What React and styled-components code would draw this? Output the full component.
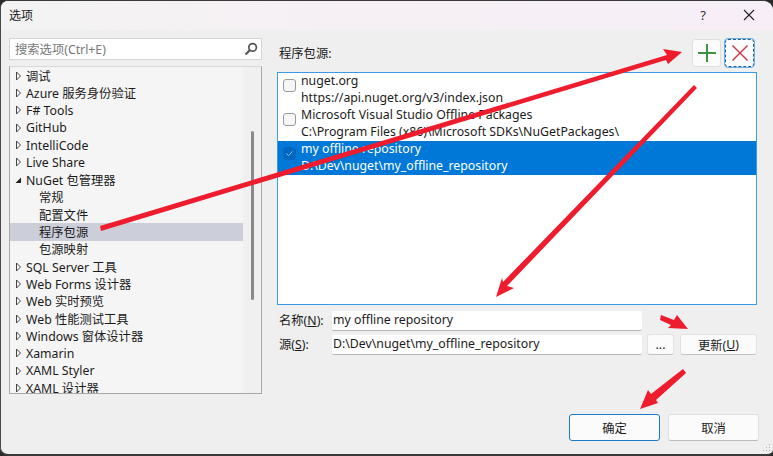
import React from 'react';
import styled, { createGlobalStyle } from 'styled-components';

const GlobalStyle = createGlobalStyle`
    html, body {
        margin: 0;
        padding: 0;
        background: #2a2a2a;
    }
    * {
        box-sizing: border-box;
    }
`;

const FONT = `"Noto Sans", "Noto Sans CJK SC", sans-serif`;

const Dialog = styled.div`
    position: relative;
    width: 773px;
    height: 456px;
    display: flex;
    flex-direction: column;
    overflow: hidden;
    background: #efefef;
    border-top: 1px solid #3a3a3a;
    border-left: 1px solid #4a4a4a;
    border-bottom: 2px solid #3a3a3a;
    border-radius: 8px 10px 6px 8px;
    font-family: ${FONT};
    font-size: 12.3px;
    color: #1b1b1b;
`;

const TitleBar = styled.div`
    flex: 0 0 29px;
    display: flex;
    align-items: center;
    padding: 0 18px 1px 8px;
    background: linear-gradient(90deg, #f3f3f3 0%, #f6f0f4 45%, #f7eef7 100%);
`;

const Title = styled.div`
    flex: 1;
    font-size: 12px;
`;

const HelpMark = styled.span`
    font-size: 13px;
    color: #333;
    margin-right: 37px;
`;

const Body = styled.div`
    flex: 1;
    display: flex;
    min-height: 0;
`;

const LeftPane = styled.div`
    flex: 0 0 276px;
    padding: 8px 0 0 8px;
    display: flex;
    flex-direction: column;
    gap: 6px;
`;

const SearchBox = styled.div`
    width: 253px;
    height: 22px;
    display: flex;
    align-items: center;
    justify-content: space-between;
    padding: 0 3px 1px 5px;
    background: #fff;
    border: 1px solid #d5d5d5;
    color: #777;
`;

const TreeBox = styled.div`
    width: 253px;
    height: 328px;
    display: flex;
    background: #f5f5f5;
    border: 1px solid #a8a8a8;
    border-top-color: #d8d8d8;
    overflow: hidden;
`;

const TreeList = styled.div`
    flex: 0 0 233px;
`;

const TreeRow = styled.div`
    height: 17.36px;
    display: flex;
    align-items: center;
    white-space: nowrap;
    padding-left: ${props => (props.child ? '29px' : '5px')};
    background: ${props => (props.selected ? '#ccced9' : 'transparent')};
`;

const Twisty = styled.svg`
    flex: 0 0 7px;
    width: 7px;
    height: 10px;
    margin-right: 4px;
`;

const ScrollTrack = styled.div`
    flex: 1;
    display: flex;
    justify-content: center;
    background: #f0f0f0;
    padding: 64px 0 0 1px;
`;

const ScrollThumb = styled.div`
    width: 3px;
    height: 169px;
    border-radius: 2px;
    background: #8a8a8a;
`;

const RightPane = styled.div`
    flex: 1;
    padding: 9px 15px 0 0;
    display: flex;
    flex-direction: column;
`;

const SourceHeader = styled.div`
    height: 32px;
    display: flex;
    align-items: flex-start;
    gap: 4px;
    padding-left: 2px;
    margin-right: 4px;
    margin-bottom: 1px;
`;

const HeaderLabel = styled.div`
    flex: 1;
    padding-top: 5px;
`;

const IconButton = styled.div`
    width: 29px;
    height: 28px;
    display: flex;
    align-items: center;
    justify-content: center;
    background: #fbfbfb;
    border-radius: 3px;
    border: ${props => (props.focused ? '1px dashed #1c5f9c' : '1px solid #e0e0e0')};
    outline: ${props => (props.focused ? '1px solid #6aaee6' : 'none')};
`;

const SourceList = styled.div`
    width: 480px;
    height: 233px;
    background: #fff;
    border: 1px solid #3c9ae4;
`;

const SourceItem = styled.div`
    height: 34px;
    display: flex;
    align-items: center;
    padding-left: 5px;
    background: ${props => (props.selected ? '#0078d7' : 'transparent')};
    color: ${props => (props.selected ? '#fff' : '#1b1b1b')};
`;

const CheckBox = styled.div`
    flex: 0 0 13px;
    width: 13px;
    height: 13px;
    margin-right: 5px;
    align-self: flex-start;
    margin-top: 6px;
    display: flex;
    align-items: center;
    justify-content: center;
    border-radius: 3px;
    background: ${props => (props.checked ? '#0067c0' : '#f6f6f6')};
    border: 1px solid ${props => (props.checked ? '#0067c0' : '#9a9a9a')};
`;

const SourceText = styled.div`
    line-height: 17px;
    white-space: nowrap;
    padding-bottom: 2px;
`;

const FieldRow = styled.div`
    display: flex;
    align-items: center;
    height: 21px;
    margin-top: ${props => props.gap}px;
`;

const FieldLabel = styled.div`
    flex: 0 0 55px;
    padding: 0 0 2px 2px;
    white-space: nowrap;
`;

const Underlined = styled.span`
    text-decoration: underline;
`;

const TextField = styled.div`
    width: 310px;
    height: 20px;
    display: flex;
    align-items: center;
    padding: 0 0 2px 1px;
    background: #fff;
    border-bottom: 1px solid #b5b5b5;
    border-radius: 2px;
    white-space: nowrap;
`;

const SmallButton = styled.div`
    width: ${props => props.w}px;
    height: 21px;
    margin-left: ${props => props.ml}px;
    display: flex;
    align-items: center;
    justify-content: center;
    background: #fbfbfb;
    border: 1px solid #e3e3e3;
    border-bottom-color: #c4c4c4;
    border-radius: 3px;
`;

const Footer = styled.div`
    display: flex;
    justify-content: flex-end;
    gap: 8px;
    margin-top: 59px;
    margin-right: -1px;
`;

const FooterButton = styled.div`
    width: 91px;
    height: 27px;
    display: flex;
    align-items: center;
    justify-content: center;
    background: #fbfbfb;
    border-radius: 3px;
    border: 1px solid ${props => (props.primary ? '#1a7cc8' : '#e0e0e0')};
    border-bottom-color: ${props => (props.primary ? '#1a7cc8' : '#bdbdbd')};
`;

const Overlay = styled.svg`
    position: absolute;
    left: -1px;
    top: -1px;
    width: 773px;
    height: 456px;
    pointer-events: none;
`;

const Grip = styled.svg`
    position: absolute;
    right: 2px;
    bottom: 1px;
    width: 10px;
    height: 10px;
`;

const treeItems = [
    { label: '调试' },
    { label: 'Azure 服务身份验证' },
    { label: 'F# Tools' },
    { label: 'GitHub' },
    { label: 'IntelliCode' },
    { label: 'Live Share' },
    { label: 'NuGet 包管理器', open: true },
    { label: '常规', child: true },
    { label: '配置文件', child: true },
    { label: '程序包源', child: true, selected: true },
    { label: '包源映射', child: true },
    { label: 'SQL Server 工具' },
    { label: 'Web Forms 设计器' },
    { label: 'Web 实时预览' },
    { label: 'Web 性能测试工具' },
    { label: 'Windows 窗体设计器' },
    { label: 'Xamarin' },
    { label: 'XAML Styler' },
    { label: 'XAML 设计器' },
];

const sources = [
    { name: 'nuget.org', url: 'https://api.nuget.org/v3/index.json' },
    { name: 'Microsoft Visual Studio Offline Packages', url: 'C:\\Program Files (x86)\\Microsoft SDKs\\NuGetPackages\\' },
    { name: 'my offline repository', url: 'D:\\Dev\\nuget\\my_offline_repository', selected: true },
];

function TreeArrow({ open }) {
    return (
        <Twisty viewBox="0 0 7 10">
            {open
                ? <path d="M0.5 8 L6 8 L6 2.5 Z" fill="#222" />
                : <path d="M1.5 1 L5.5 5 L1.5 9 Z" fill="none" stroke="#444" strokeWidth="1" />}
        </Twisty>
    );
}

function Arrow({ points }) {
    return <polygon points={points} fill="#ee1c2c" />;
}

function App() {
    return (
        <Dialog>
            <GlobalStyle />
            <TitleBar>
                <Title>选项</Title>
                <HelpMark>?</HelpMark>
                <svg width="12" height="12" viewBox="0 0 12 12">
                    <path d="M1 1 L11 11 M11 1 L1 11" stroke="#222" strokeWidth="1.1" />
                </svg>
            </TitleBar>
            <Body>
                <LeftPane>
                    <SearchBox>
                        <span>搜索选项(Ctrl+E)</span>
                        <svg width="14" height="14" viewBox="0 0 14 14">
                            <circle cx="8.6" cy="5.4" r="3.8" fill="none" stroke="#555" strokeWidth="1.7" />
                            <path d="M5.8 8.2 L1.5 12.5" stroke="#555" strokeWidth="2.2" />
                        </svg>
                    </SearchBox>
                    <TreeBox>
                        <TreeList>
                            {treeItems.map(item => (
                                <TreeRow key={item.label} child={item.child} selected={item.selected}>
                                    {!item.child && <TreeArrow open={item.open} />}
                                    {item.label}
                                </TreeRow>
                            ))}
                        </TreeList>
                        <ScrollTrack>
                            <ScrollThumb />
                        </ScrollTrack>
                    </TreeBox>
                </LeftPane>
                <RightPane>
                    <SourceHeader>
                        <HeaderLabel>程序包源:</HeaderLabel>
                        <IconButton>
                            <svg width="18" height="18" viewBox="0 0 18 18">
                                <path d="M9 0 V18 M0 9 H18" stroke="#3f9142" strokeWidth="2" />
                            </svg>
                        </IconButton>
                        <IconButton focused>
                            <svg width="18" height="18" viewBox="0 0 18 18">
                                <path d="M1.5 1.5 L16.5 16.5 M16.5 1.5 L1.5 16.5" stroke="#c8323f" strokeWidth="1.4" />
                            </svg>
                        </IconButton>
                    </SourceHeader>
                    <SourceList>
                        {sources.map(source => (
                            <SourceItem key={source.name} selected={source.selected}>
                                <CheckBox checked={source.selected}>
                                    {source.selected && (
                                        <svg width="9" height="9" viewBox="0 0 9 9">
                                            <path d="M1.5 4.5 L3.7 6.7 L7.5 2.3" fill="none" stroke="#8fc0ea" strokeWidth="1" />
                                        </svg>
                                    )}
                                </CheckBox>
                                <SourceText>
                                    <div>{source.name}</div>
                                    <div>{source.url}</div>
                                </SourceText>
                            </SourceItem>
                        ))}
                    </SourceList>
                    <FieldRow gap={5}>
                        <FieldLabel>名称(<Underlined>N</Underlined>):</FieldLabel>
                        <TextField>my offline repository</TextField>
                    </FieldRow>
                    <FieldRow gap={3}>
                        <FieldLabel>源(<Underlined>S</Underlined>):</FieldLabel>
                        <TextField>D:\Dev\nuget\my_offline_repository</TextField>
                        <SmallButton w={27} ml={5}>...</SmallButton>
                        <SmallButton w={77} ml={6}>更新(<Underlined>U</Underlined>)</SmallButton>
                    </FieldRow>
                    <Footer>
                        <FooterButton primary>确定</FooterButton>
                        <FooterButton>取消</FooterButton>
                    </Footer>
                </RightPane>
            </Body>
            <Overlay viewBox="0 0 773 456">
                <Arrow points="100,226 667,55 663,49 682,52 668,64 666,60 101,231" />
                <Arrow points="694,85 503,282 502,278 496,297 514,288 507,286 697,88" />
                <Arrow points="661,315 674,320 677,315 688,329 668,328 671,325 660,320" />
                <Arrow points="683,369 686,373 656,400 658,403 640,409 648,390 651,394" />
            </Overlay>
            <Grip viewBox="0 0 10 10">
                <path d="M8 1 h1 v1 h-1 Z M5 4 h1 v1 h-1 Z M8 4 h1 v1 h-1 Z M2 7 h1 v1 h-1 Z M5 7 h1 v1 h-1 Z M8 7 h1 v1 h-1 Z" fill="#b0b0b0" />
            </Grip>
        </Dialog>
    );
}

export default App;
